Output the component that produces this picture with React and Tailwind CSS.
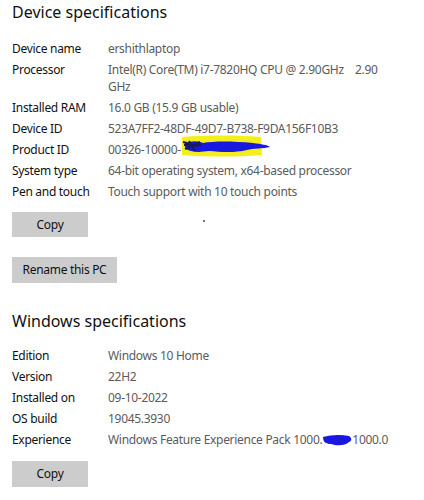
import React from 'react';

const FONT = { fontFamily: '"Noto Sans", "Open Sans", sans-serif' };

const device = [
  ['Device name', 'ershithlaptop'],
  ['Processor', ['Intel(R) Core(TM) i7-7820HQ CPU @ 2.90GHz\u00a0\u00a0\u00a0\u00a02.90', 'GHz']],
  ['Installed RAM', '16.0 GB (15.9 GB usable)'],
  ['Device ID', '523A7FF2-48DF-49D7-B738-F9DA156F10B3'],
  ['Product ID', 'product'],
  ['System type', '64-bit operating system, x64-based processor'],
  ['Pen and touch', 'Touch support with 10 touch points'],
];

const windows = [
  ['Edition', 'Windows 10 Home'],
  ['Version', '22H2'],
  ['Installed on', '09-10-2022'],
  ['OS build', '19045.3930'],
  ['Experience', 'experience'],
];

// hand-drawn marker scribbles over the redacted bits
function ProductScribble() {
  return (
    <svg width="92" height="22" viewBox="0 0 92 22" className="absolute left-0 -top-[6px]">
      <path d="M1 2 C25 0 55 0 80 2 L81 20 C55 22 25 22 1 20 Z" fill="#f3ee1c" />
      <path d="M3 9 C10 5 18 6 22 8 C32 6 52 6 72 8 C80 9 87 10 89 12 C82 14 72 13 66 15 C54 18 40 17 28 16 C20 17 12 18 5 14 Z" fill="#1818e0" />
      <path d="M2 7 L17 11 M4 14 L19 7 M8 6 L14 16 M3 10 L20 10" stroke="#1a1a55" strokeWidth="2" fill="none" />
    </svg>
  );
}

function ExpScribble() {
  return (
    <svg width="30" height="14" viewBox="0 0 30 14" className="inline-block align-middle -mt-[1px]">
      <path d="M1 4 C8 2 18 1 27 3 C30 5 30 8 27 9 C23 13 15 13 9 11 C4 11 1 9 1 4 Z" fill="#1818e0" />
    </svg>
  );
}

function Value({ v }) {
  if (Array.isArray(v)) {
    return (
      <div>
        <div>{v[0]}</div>
        <div>{v[1]}</div>
      </div>
    );
  }
  if (v === 'product') {
    return (
      <div className="flex">
        <span>00326-10000-</span>
        <span className="relative w-[90px]"><ProductScribble /></span>
      </div>
    );
  }
  if (v === 'experience') {
    return (
      <div className="whitespace-nowrap">
        Windows Feature Experience Pack 1000.<ExpScribble />1000.0
      </div>
    );
  }
  return <div>{v}</div>;
}

function Specs({ rows }) {
  return (
    <div className="grid grid-cols-[96px_1fr] gap-y-[4px] text-[12px] leading-[17px] tracking-[-0.3px]">
      {rows.map(([k, v]) => (
        <React.Fragment key={k}>
          <div className="text-[#111]">{k}</div>
          <div className="text-[#5b5b5b]"><Value v={v} /></div>
        </React.Fragment>
      ))}
    </div>
  );
}

function Btn({ children, w, h = 'h-[26px]' }) {
  return (
    <button className={`${w} ${h} bg-[#cccccc] text-[12px] tracking-[-0.3px] text-[#111] flex items-center justify-center`}>
      {children}
    </button>
  );
}

export default function App() {
  return (
    <div className="w-[424px] h-[500px] bg-white px-3 overflow-hidden" style={FONT}>
      <h2 className="text-[16px] leading-[24px] text-[#111]">Device specifications</h2>
      <div className="mt-[16px]">
        <Specs rows={device} />
      </div>
      <div className="relative mt-[12px]">
        <Btn w="w-[76px]" h="h-[25px]">Copy</Btn>
        <span className="absolute left-[191px] top-[8px] w-[2px] h-[2px] rounded-full bg-[#444]" />
      </div>
      <div className="mt-[20px]">
        <Btn w="w-[105px]">Rename this PC</Btn>
      </div>
      <h2 className="text-[16px] leading-[24px] text-[#111] mt-[26px]">Windows specifications</h2>
      <div className="mt-[14px]">
        <Specs rows={windows} />
      </div>
      <div className="mt-[13px]">
        <Btn w="w-[76px]">Copy</Btn>
      </div>
    </div>
  );
}
